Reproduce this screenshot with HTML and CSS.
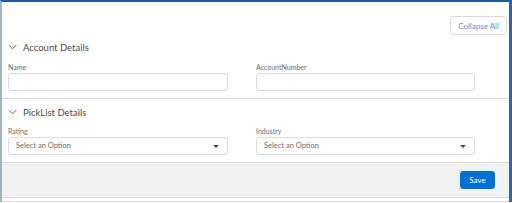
FILE: index.html
```html
<!DOCTYPE html>
<html>
<head>
  <meta charset="UTF-8">
  <title>Account Form</title>
  <link rel="stylesheet" href="styles.css">
</head>
<body>
  <div class="frame">
    <div class="card">
      <div class="toolbar">
        <button class="btn-neutral">Collapse All</button>
      </div>

      <div class="section section-first">
        <div class="section-title">
          <svg class="chevron" viewBox="0 0 10 6" width="9" height="6"><path d="M1 1 L5 5 L9 1" fill="none" stroke="#55534f" stroke-width="1"/></svg>
          <span>Account Details</span>
        </div>
        <div class="fields">
          <div class="field">
            <label>Name</label>
            <div class="input"></div>
          </div>
          <div class="field">
            <label>AccountNumber</label>
            <div class="input"></div>
          </div>
        </div>
      </div>

      <div class="section">
        <div class="section-title">
          <svg class="chevron" viewBox="0 0 10 6" width="9" height="6"><path d="M1 1 L5 5 L9 1" fill="none" stroke="#55534f" stroke-width="1"/></svg>
          <span>PickList Details</span>
        </div>
        <div class="fields">
          <div class="field">
            <label>Rating</label>
            <div class="input select">Select an Option<span class="caret"></span></div>
          </div>
          <div class="field">
            <label>Industry</label>
            <div class="input select">Select an Option<span class="caret"></span></div>
          </div>
        </div>
      </div>

      <div class="footer">
        <button class="btn-brand">Save</button>
      </div>
    </div>
    <div class="bottom"></div>
  </div>
</body>
</html>
```

FILE: styles.css
```css
body {
  margin: 0;
  font-family: Lato, "Open Sans", sans-serif;
  color: #4a4a48;
  background-color: #ffffff;
  height: 203px;
  overflow: hidden;
}

.frame {
  border-top: 2px solid #1f5b9c;
  border-left: 2px solid #9fb3cc;
  border-right: 3px solid #2d67a9;
  background-color: #ffffff;
}

.card {
  background-color: #ffffff;
  border-top-right-radius: 4px;
  padding-top: 14px;
}

.toolbar {
  display: flex;
  justify-content: flex-end;
  padding-right: 2px;
}

.btn-neutral {
  font-family: inherit;
  font-size: 8px;
  color: #5b8fd6;
  background-color: #ffffff;
  border: 1px solid #dddbda;
  border-radius: 3px;
  height: 19px;
  width: 57px;
  padding: 0;
}

.section {
  border-bottom: 1px solid #dddbda;
  padding-bottom: 7px;
}

.section-title {
  display: flex;
  align-items: center;
  gap: 6px;
  padding-left: 6px;
  height: 16px;
  font-size: 9.5px;
  margin-top: 5px;
}

.section-first .section-title {
  margin-top: 4px;
}

.fields {
  display: grid;
  grid-template-columns: 220px 219px;
  column-gap: 28px;
  padding-left: 6px;
  margin-top: 6px;
}

.section-first .fields {
  margin-top: 7px;
}

.field label {
  display: block;
  font-size: 7px;
  color: #6b6b6b;
  height: 11px;
  line-height: 11px;
}

.input {
  height: 16px;
  border: 1px solid #dddbda;
  border-radius: 3px;
  background-color: #ffffff;
}

.select {
  position: relative;
  font-size: 7.5px;
  color: #6b6b6b;
  line-height: 16px;
  padding-left: 7px;
}

.caret {
  position: absolute;
  right: 8px;
  top: 7px;
  border-left: 3px solid transparent;
  border-right: 3px solid transparent;
  border-top: 3px solid #4a4a4a;
}

.footer {
  display: flex;
  justify-content: flex-end;
  align-items: center;
  height: 34px;
  background-color: #f3f2f2;
  border-bottom: 1px solid #dddbda;
  padding-right: 14px;
}

.btn-brand {
  font-family: inherit;
  font-size: 8px;
  color: #ffffff;
  background-color: #0070d2;
  border: 1px solid #0070d2;
  border-radius: 3px;
  height: 18px;
  width: 35px;
  padding: 0;
}

.bottom {
  height: 3px;
  border-bottom: 1px solid #dddbda;
}
```
